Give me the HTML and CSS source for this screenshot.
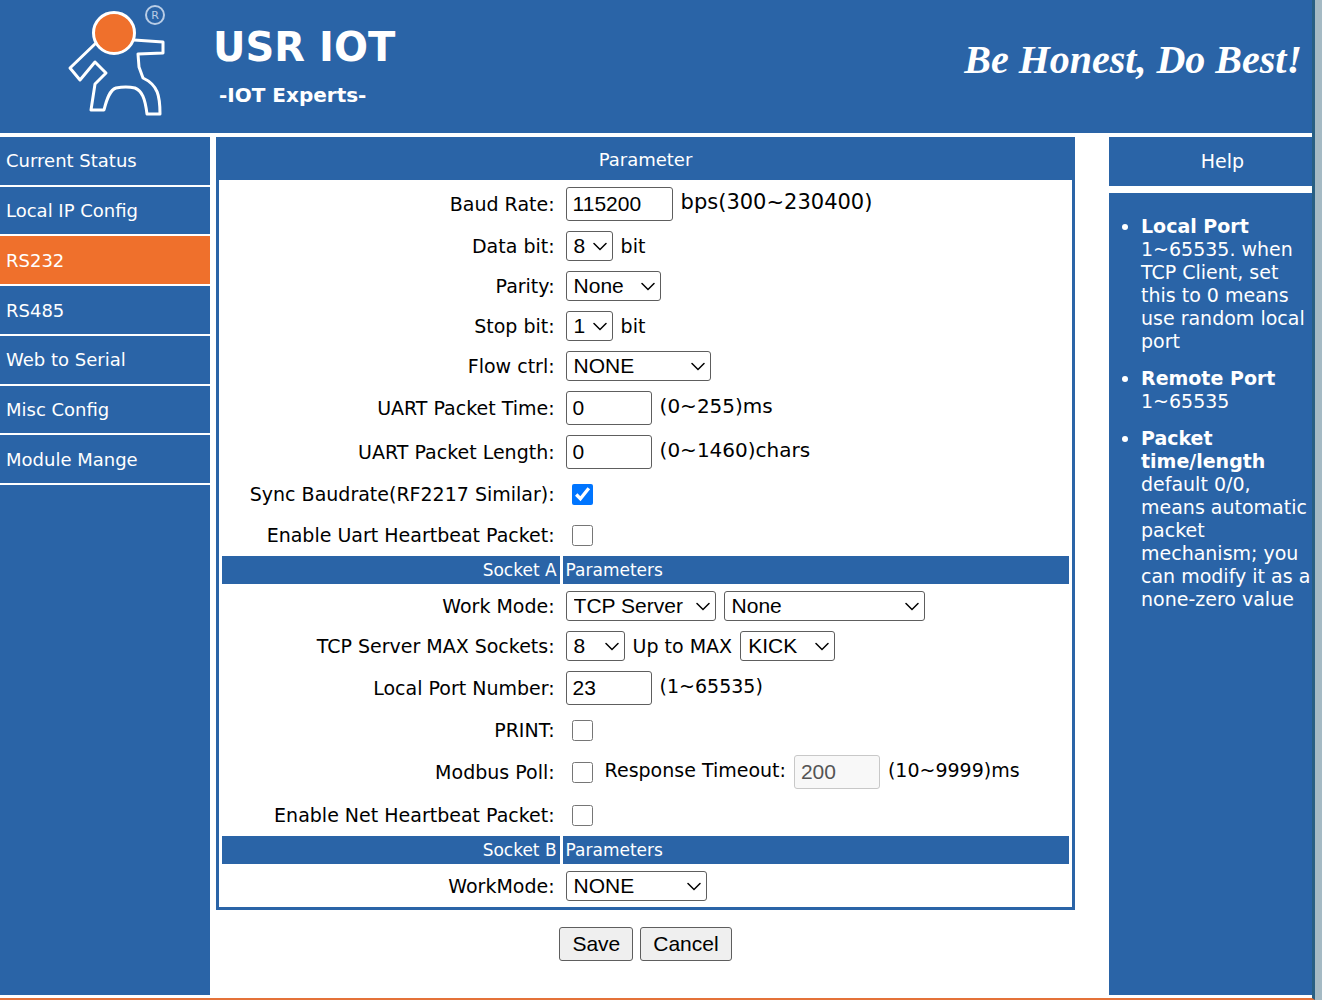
FILE: index.html
```html
<!DOCTYPE html>
<html lang="en">
<head>
<meta charset="utf-8">
<meta name="viewport" content="width=device-width, initial-scale=1">
<title>USR IOT - RS232</title>
<link rel="stylesheet" href="styles.css">
</head>
<body>
<svg class="defs" aria-hidden="true"><symbol id="chevron" viewBox="0 0 14 9"><path d="M1 1.500 L7 7.500 L13 1.500" fill="none" stroke="#000" stroke-width="1.500" stroke-linecap="round"/></symbol></svg>
<div class="page">
  <header class="banner">
    <svg class="logo" viewBox="0 0 110 120" role="img" aria-label="USR IOT logo">
      <g fill="none" stroke="#fff" stroke-width="3" stroke-linejoin="round">
        <path d="M31 43 L5 68 L15 80 L30 62 L41 73 L30 84 L26 110 L39 110 C42 98 45 90 51 88 Q61 86 70 88 C77 91 80 98 82 114 L95 114 C95 96 93 85 78 78 L74 67 L73 54 L98 53 L98 42 L69 40"/>
        <circle cx="49" cy="33" r="20.500" fill="#ef702c"/>
      </g>
      <circle cx="90" cy="15" r="9" fill="none" stroke="#b9cde6" stroke-width="2"/>
      <text x="90" y="19" text-anchor="middle" class="reg">R</text>
    </svg>
    <div class="brand">
      <h1>USR IOT</h1>
      <p>-IOT Experts-</p>
    </div>
    <p class="slogan">Be Honest, Do Best!</p>
  </header>

  <div class="columns">
    <nav class="sidebar">
      <ul>
        <li><a href="#status">Current Status</a></li>
        <li><a href="#ip">Local IP Config</a></li>
        <li><a href="#rs232" class="active" aria-current="page">RS232</a></li>
        <li><a href="#rs485">RS485</a></li>
        <li><a href="#web">Web to Serial</a></li>
        <li><a href="#misc">Misc Config</a></li>
        <li><a href="#module">Module Mange</a></li>
      </ul>
    </nav>

    <main>
      <form>
        <section class="panel">
          <h2>Parameter</h2>
          <div class="rows">
            <div class="row tall"><label for="baud">Baud Rate:</label>
              <div class="field"><input class="text wide" id="baud" type="text" value="115200"><span class="hint large">bps(300~230400)</span></div></div>
            <div class="row"><label for="data">Data bit:</label>
              <div class="field"><span class="select w-xs"><select id="data"><option>8</option><option>7</option></select><svg><use href="#chevron"/></svg></span><span>bit</span></div></div>
            <div class="row"><label for="parity">Parity:</label>
              <div class="field"><span class="select w-m"><select id="parity"><option>None</option><option>Odd</option><option>Even</option></select><svg><use href="#chevron"/></svg></span></div></div>
            <div class="row"><label for="stop">Stop bit:</label>
              <div class="field"><span class="select w-xs"><select id="stop"><option>1</option><option>2</option></select><svg><use href="#chevron"/></svg></span><span>bit</span></div></div>
            <div class="row"><label for="flow">Flow ctrl:</label>
              <div class="field"><span class="select w-l"><select id="flow"><option>NONE</option></select><svg><use href="#chevron"/></svg></span></div></div>
            <div class="row tall"><label for="ptime">UART Packet Time:</label>
              <div class="field"><input class="text" id="ptime" type="text" value="0"><span class="hint medium">(0~255)ms</span></div></div>
            <div class="row tall"><label for="plen">UART Packet Length:</label>
              <div class="field"><input class="text" id="plen" type="text" value="0"><span class="hint medium">(0~1460)chars</span></div></div>
            <div class="row"><label for="sync">Sync Baudrate(RF2217 Similar):</label>
              <div class="field"><input id="sync" type="checkbox" checked></div></div>
            <div class="row last"><label for="uheart">Enable Uart Heartbeat Packet:</label>
              <div class="field"><input id="uheart" type="checkbox"></div></div>

            <h3 class="bar"><span>Socket A</span><span>Parameters</span></h3>
            <div class="row"><label for="modea">Work Mode:</label>
              <div class="field"><span class="select w-l2"><select id="modea"><option>TCP Server</option><option>TCP Client</option></select><svg><use href="#chevron"/></svg></span><span class="select w-xl"><select aria-label="Work mode option"><option>None</option></select><svg><use href="#chevron"/></svg></span></div></div>
            <div class="row"><label for="maxs">TCP Server MAX Sockets:</label>
              <div class="field"><span class="select w-s"><select id="maxs"><option>8</option></select><svg><use href="#chevron"/></svg></span><label for="kick">Up to MAX</label><span class="select w-m"><select id="kick"><option>KICK</option><option>KEEP</option></select><svg><use href="#chevron"/></svg></span></div></div>
            <div class="row tall"><label for="port">Local Port Number:</label>
              <div class="field"><input class="text" id="port" type="text" value="23"><span class="hint">(1~65535)</span></div></div>
            <div class="row"><label for="print">PRINT:</label>
              <div class="field"><input id="print" type="checkbox"></div></div>
            <div class="row tall"><label for="modbus">Modbus Poll:</label>
              <div class="field"><input id="modbus" type="checkbox"><label class="hint" for="timeout">Response Timeout:</label><input class="text" id="timeout" type="text" value="200" disabled><span class="hint">(10~9999)ms</span></div></div>
            <div class="row last"><label for="nheart">Enable Net Heartbeat Packet:</label>
              <div class="field"><input id="nheart" type="checkbox"></div></div>

            <h3 class="bar"><span>Socket B</span><span>Parameters</span></h3>
            <div class="row"><label for="modeb">WorkMode:</label>
              <div class="field"><span class="select w-l1"><select id="modeb"><option>NONE</option></select><svg><use href="#chevron"/></svg></span></div></div>
          </div>
        </section>
        <div class="actions">
          <button type="submit">Save</button>
          <button type="reset">Cancel</button>
        </div>
      </form>
    </main>

    <aside class="help">
      <h2>Help</h2>
      <ul>
        <li><b>Local Port</b><br>1~65535. when TCP Client, set this to 0 means use random local port</li>
        <li><b>Remote Port</b><br>1~65535</li>
        <li><b>Packet time/length</b><br>default 0/0, means automatic packet mechanism; you can modify it as a none-zero value</li>
      </ul>
    </aside>
  </div>
</div>
</body>
</html>
```
FILE: styles.css
```css
* { box-sizing: border-box; }

body {
  margin: 0;
  background: #a5bac4;
  color: #000;
  font-family: "DejaVu Sans", Verdana, sans-serif;
  font-size: 19px;
  line-height: 23px;
}

h1, h2, h3, p, ul { margin: 0; padding: 0; font-weight: normal; }

.defs { display: none; }

.page {
  display: flex;
  flex-direction: column;
  min-height: 100vh;
  margin-right: 7px;
  border-right: 3px solid #285f83;
  border-bottom: 2px solid #e47239;
  background: #fff;
}

.banner {
  display: flex;
  align-items: flex-start;
  min-height: 133px;
  padding-left: 65px;
  background: #2a64a7;
  color: #fff;
}

.logo { width: 110px; height: 120px; }
.reg { fill: #b9cde6; font: 11px "DejaVu Sans", sans-serif; }

.brand { margin-left: 38px; padding-top: 24px; }
.brand h1 { font-size: 40px; font-weight: bold; line-height: 46px; }
.brand p { padding: 14px 0 0 6px; font-size: 20px; font-weight: bold; }

.slogan {
  margin-left: auto;
  padding: 37px 10px 0 0;
  font: italic bold 40px/46px "Liberation Serif", serif;
}

.columns {
  flex: 1;
  display: grid;
  grid-template-columns: 210px 1fr 203px;
  padding: 4px 0 3px;
}

.sidebar { background: #2a64a7; font-size: 18px; }
.sidebar ul { display: flex; flex-direction: column; height: 348px; list-style: none; }
.sidebar li { flex: 1; display: flex; border-bottom: 2px solid #fff; }
.sidebar a {
  flex: 1;
  display: flex;
  align-items: center;
  padding-left: 6px;
  color: #fff;
  text-decoration: none;
}
.sidebar .active { background: #ef702c; }

main { padding: 0 34px 0 6px; }

.panel { border: 3px solid #2a64a7; }
.panel h2 {
  padding: 8px 0 9px;
  background: #2a64a7;
  color: #fff;
  font-size: 18px;
  text-align: center;
}
.rows { padding: 2px 3px 1px; }

.row, .bar { display: grid; grid-template-columns: 2fr 3fr; column-gap: 3px; }
.row { align-items: center; min-height: 40px; }
.row.tall { min-height: 44px; }
.row.last { min-height: 42px; }
.row > label { padding: 1px 5px 0 0; text-align: right; }

.bar { margin-bottom: 2px; color: #fff; font-size: 17px; line-height: 28px; }
.bar span { padding: 0 3px; background: #2a64a7; }
.bar span:first-child { text-align: right; }

.field { display: flex; align-items: center; gap: 8px; padding-left: 3px; }
.hint { padding-bottom: 4px; }
.medium { font-size: 20px; }
.large { font-size: 21px; }

.text, select, button {
  border: 1px solid #5e5e5e;
  border-radius: 3px;
  color: #000;
  font: 21px "Liberation Sans", Arial, sans-serif;
}
.text { width: 86px; height: 34px; padding: 0 6px 1px; background: #fff; }
.text.wide { width: 107px; }
.text:disabled { border-color: #c8c8c8; background: #f8f8f8; color: #545454; }

.select { position: relative; display: flex; }
.select svg { position: absolute; right: 6px; top: 11px; width: 14px; height: 9px; pointer-events: none; }
select {
  width: 100%;
  height: 30px;
  padding: 0 7px 2px;
  appearance: none;
  background: #fff;
}
.w-xs { width: 47px; }
.w-s { width: 59px; }
.w-m { width: 95px; }
.w-l { width: 145px; }
.w-l1 { width: 141px; }
.w-l2 { width: 150px; }
.w-xl { width: 201px; }

input[type="checkbox"] { width: 21px; height: 21px; margin: 0 4px 0 6px; }

.actions { display: flex; justify-content: center; gap: 7px; padding-top: 17px; }
button { height: 34px; padding: 0 12px; background: #efefef; }

.help { display: flex; flex-direction: column; gap: 7px; color: #fff; }
.help h2 { padding: 13px 0 13px 24px; background: #2a64a7; font-size: 19px; text-align: center; }
.help ul { flex: 1; padding: 22px 0 0 32px; background: #2a64a7; }
.help li { margin-bottom: 14px; }
```
